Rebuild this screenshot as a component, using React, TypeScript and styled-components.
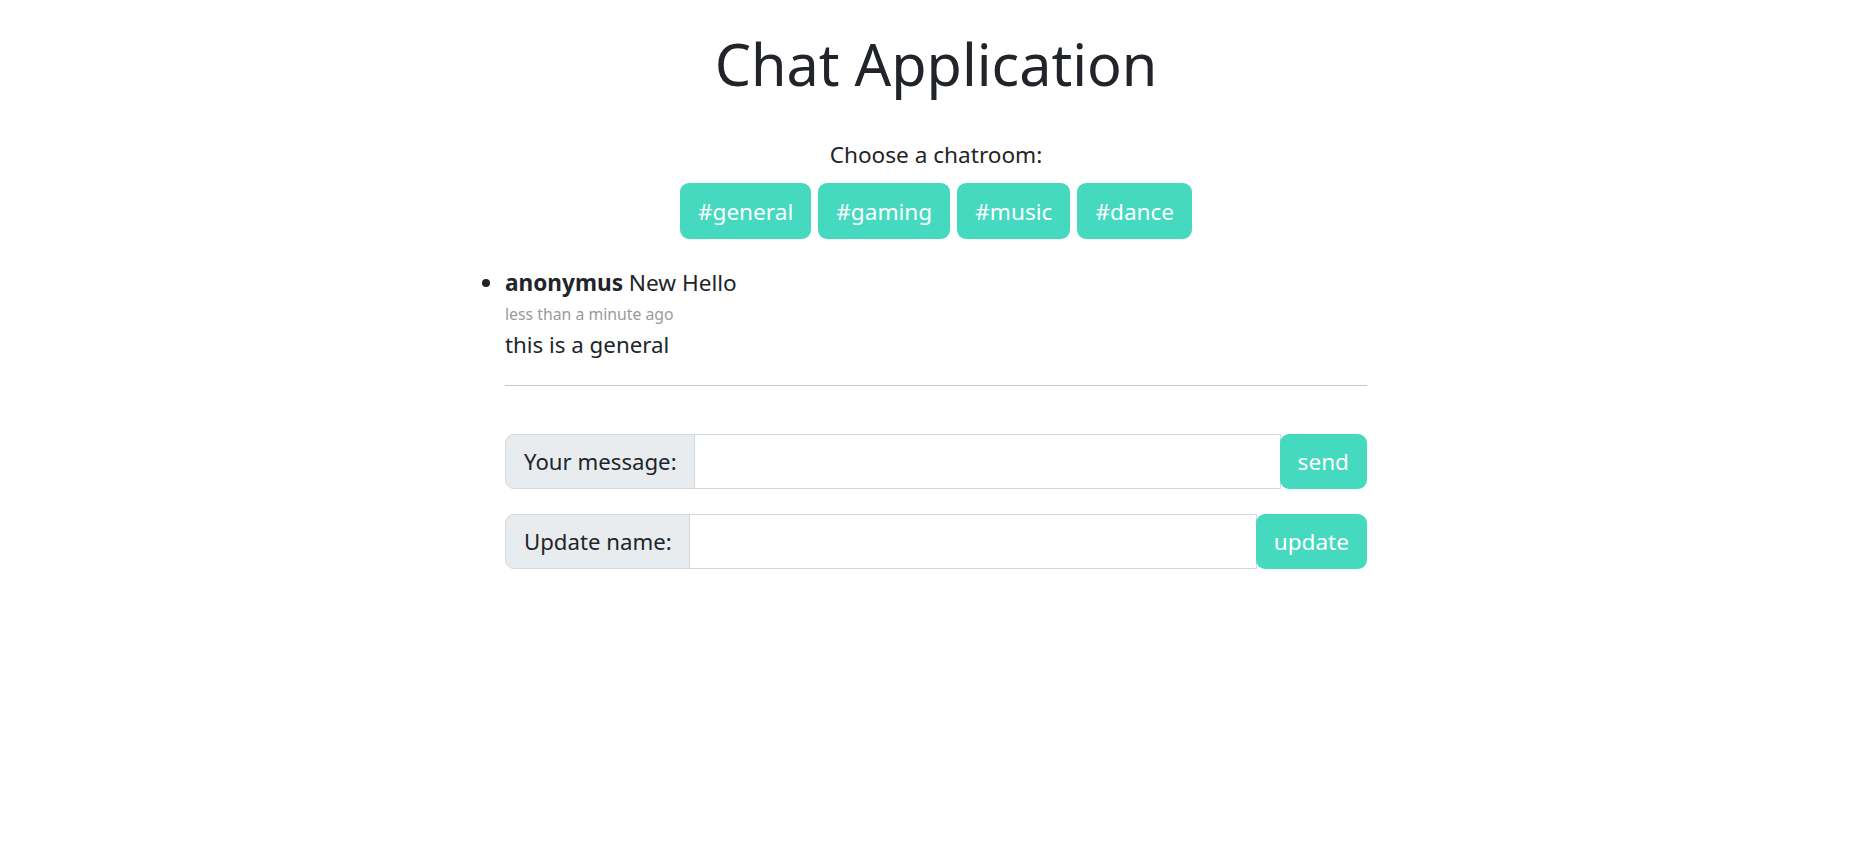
import styled, { createGlobalStyle } from "styled-components";

const GlobalStyle = createGlobalStyle`
  html, body {
    margin: 0;
    padding: 0;
    background: #ffffff;
  }
  body {
    font-family: "Noto Sans", "Open Sans", Arial, sans-serif;
    color: #212529;
  }
`;

const Page = styled.div`
  display: flex;
  flex-direction: column;
  align-items: center;
`;

const Title = styled.h1`
  margin: 30px 0 0;
  font-size: 57.5px;
  line-height: 69px;
  font-weight: 400;
  text-align: center;
`;

const Prompt = styled.p`
  margin: 40px 0 0;
  font-size: 22.6px;
  line-height: 32px;
`;

const RoomBar = styled.div`
  display: flex;
  gap: 7px;
  margin-top: 12px;
`;

const TealButton = styled.button`
  height: 56px;
  padding: 0 18px;
  border: none;
  border-radius: 9px;
  background: #45d9c0;
  color: #ffffff;
  font-family: inherit;
  font-size: 22.6px;
  cursor: pointer;
`;

const Panel = styled.div`
  width: 862px;
  margin-top: 28px;
`;

const MessageList = styled.ul`
  margin: 0;
  padding: 0;
`;

const MessageItem = styled.li`
  list-style: disc outside;
  font-size: 22.6px;
`;

const Header = styled.div`
  line-height: 32px;
`;

const Author = styled.b`
  font-weight: 700;
`;

const Stamp = styled.div`
  margin-top: 4px;
  font-size: 15.8px;
  line-height: 22px;
  color: #9a9a9a;
`;

const Body = styled.div`
  margin-top: 4px;
  font-size: 22.3px;
  line-height: 32px;
`;

const Divider = styled.hr`
  margin: 24px 0 0;
  border: none;
  border-top: 1px solid #c9cacb;
`;

const Form = styled.form`
  display: flex;
  flex-direction: column;
  gap: 25px;
  margin-top: 48px;
`;

const InputGroup = styled.div`
  display: flex;
  height: 55px;
`;

const GroupLabel = styled.span`
  display: flex;
  align-items: center;
  padding: 0 17px 0 18px;
  background: #e9ecef;
  border: 1px solid #d6dadf;
  border-radius: 9px 0 0 9px;
  font-size: 22.2px;
  white-space: nowrap;
`;

const TextInput = styled.input`
  flex: 1;
  min-width: 0;
  margin-left: -1px;
  border: 1px solid #d3d7dc;
  border-radius: 0;
  font-family: inherit;
  font-size: 22.2px;
  outline: none;
`;

const GroupButton = styled(TealButton)`
  height: 55px;
  margin-left: -1px;
`;

const rooms = ["#general", "#gaming", "#music", "#dance"];

export default function App() {
  return (
    <Page>
      <GlobalStyle />
      <Title>Chat Application</Title>
      <Prompt>Choose a chatroom:</Prompt>
      <RoomBar>
        {rooms.map((r) => (
          <TealButton key={r}>{r}</TealButton>
        ))}
      </RoomBar>
      <Panel>
        <MessageList>
          <MessageItem>
            <Header>
              <Author>anonymus</Author> New Hello
            </Header>
            <Stamp>less than a minute ago</Stamp>
            <Body>this is a general</Body>
          </MessageItem>
        </MessageList>
        <Divider />
        <Form onSubmit={(e) => e.preventDefault()}>
          <InputGroup>
            <GroupLabel>Your message:</GroupLabel>
            <TextInput type="text" />
            <GroupButton type="submit">send</GroupButton>
          </InputGroup>
          <InputGroup>
            <GroupLabel>Update name:</GroupLabel>
            <TextInput type="text" />
            <GroupButton type="button">update</GroupButton>
          </InputGroup>
        </Form>
      </Panel>
    </Page>
  );
}
